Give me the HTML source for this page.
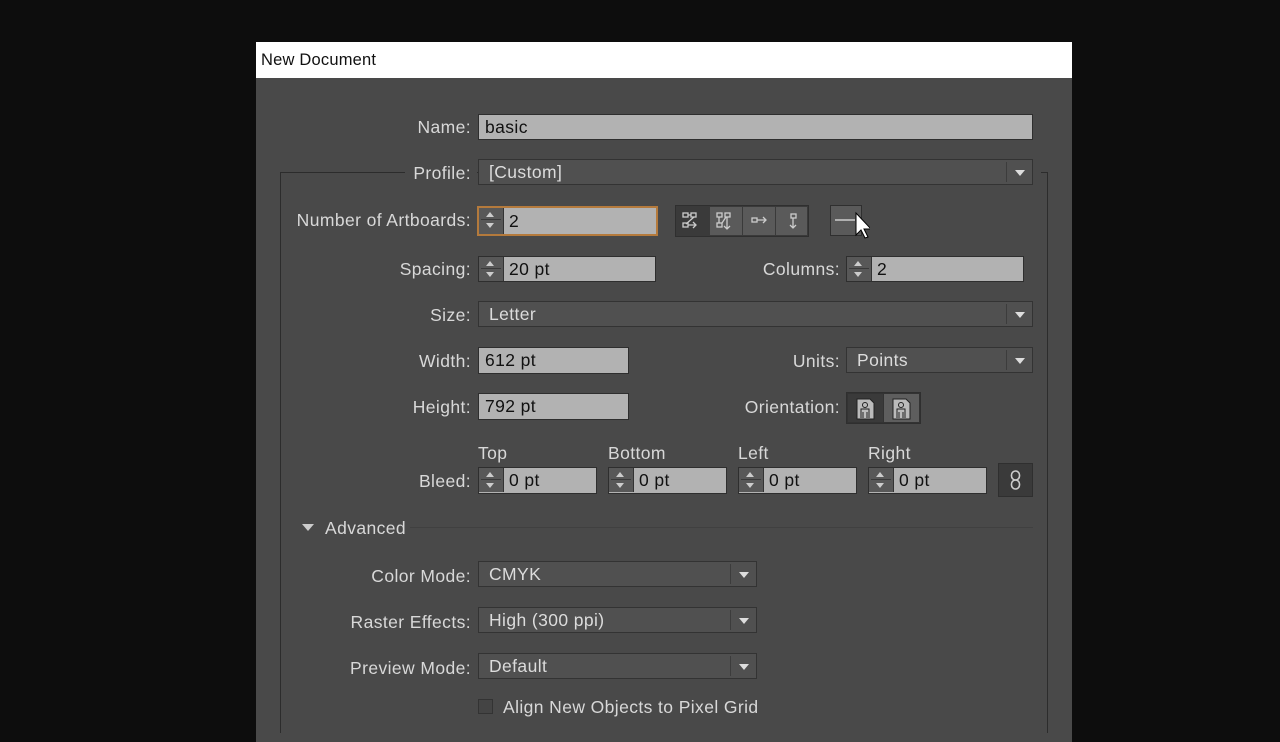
<!DOCTYPE html>
<html><head><style>
body{margin:0;width:1280px;height:720px;background:#0d0d0d;overflow:hidden;font-family:"Liberation Sans",sans-serif;font-size:17.5px;letter-spacing:0.4px;}
.dlg{position:absolute;left:256px;top:42px;width:816px;height:700px;background:#494949;}
.title{position:absolute;left:256px;top:42px;width:816px;height:36px;background:#fff;color:#111;font-size:16.5px;line-height:36px;letter-spacing:0.2px}
.title span{margin-left:5px}
.a{position:absolute;}
.lbl{position:absolute;color:#d8d8d8;text-align:right;white-space:nowrap;}
.inp{position:absolute;background:#b2b2b2;border:1px solid #2e2e2e;color:#111;height:24px;line-height:24px;box-sizing:border-box;padding-left:6px;}
.spin{position:absolute;background:#b2b2b2;border:1px solid #2e2e2e;height:26px;box-sizing:border-box;color:#111;line-height:24px;}
.spin .ar{position:absolute;left:0;top:0;width:24px;height:24px;background:#585858;border-right:1px solid #333;}
.spin .ar:before{content:"";position:absolute;left:7px;top:4px;border:4px solid transparent;border-bottom:5px solid #ccc;border-top:0}
.spin .ar:after{content:"";position:absolute;left:7px;top:15px;border:4px solid transparent;border-top:5px solid #ccc;border-bottom:0}
.spin .ar i{position:absolute;left:2px;right:2px;top:11px;border-top:1px solid #3a3a3a}
.spin .t{position:absolute;left:30px;}
.dd{position:absolute;background:#505050;border:1px solid #333;height:26px;box-sizing:border-box;color:#dcdcdc;line-height:24px;padding-left:10px;}
.dd:after{content:"";position:absolute;right:7px;top:10px;border:5px solid transparent;border-top:6px solid #ddd;border-bottom:0}
.dd .sep{position:absolute;right:25px;top:2px;bottom:2px;border-left:1px solid #3c3c3c}
.btn{position:absolute;background:#5a5a5a;border:1px solid #2f2f2f;box-sizing:border-box;}
</style></head><body>
<div class="dlg"></div>
<div class="title"><span>New Document</span></div>
<div class="a" style="left:280px;top:172px;width:766px;height:560px;border:1px solid #2c2c2c;border-bottom:none"></div>

<div class="lbl" style="right:809px;top:117px">Name:</div>
<div class="inp" style="left:478px;top:114px;width:555px;height:26px">basic</div>

<div class="a" style="left:405px;top:160px;width:72px;height:26px;background:#494949"></div>
<div class="a" style="left:1033px;top:160px;width:8px;height:26px;background:#494949"></div>
<div class="lbl" style="right:809px;top:163px">Profile:</div>
<div class="dd" style="left:478px;top:159px;width:555px">[Custom]<span class="sep"></span></div>

<div class="lbl" style="right:809px;top:210px">Number of Artboards:</div>
<div class="spin" style="left:477px;top:206px;width:181px;height:30px;border:2px solid #b47a3c"><div class="ar" style="height:26px"><i></i></div><span class="t" style="line-height:26px">2</span></div>
<div class="btn" style="left:675px;top:205px;width:134px;height:32px;background:#3a3a3a"></div>
<div class="btn" style="left:677px;top:207px;width:32px;height:28px;background:#3a3a3a;border:none"></div>
<div class="btn" style="left:710px;top:207px;width:32px;height:28px;border:none"></div>
<div class="btn" style="left:743px;top:207px;width:32px;height:28px;border:none"></div>
<div class="btn" style="left:776px;top:207px;width:31px;height:28px;border:none"></div>
<svg class="a" style="left:675px;top:205px" width="134" height="32" fill="none" stroke="#ccc" stroke-width="1.3">
<rect x="8" y="8" width="5" height="4"/><rect x="16" y="8" width="5" height="4"/><path d="M13 10h3M19 12l-8 7"/><rect x="8" y="18" width="5" height="4"/><path d="M13 20h8m-3-3l3 3-3 3"/>
<rect x="42" y="8" width="5" height="4"/><rect x="50" y="8" width="5" height="4"/><rect x="42" y="18" width="5" height="4"/><path d="M44 12v6M52 12v12m-3-3l3 3 3-3M47 18l4-6"/>
<rect x="77" y="13" width="5" height="4"/><path d="M82 15h9m-3-3l3 3-3 3"/>
<rect x="116" y="9" width="5" height="4"/><path d="M118 13v10m-3-3l3 3 3-3"/>
</svg>
<div class="btn" style="left:830px;top:205px;width:32px;height:31px"></div>
<svg class="a" style="left:830px;top:205px" width="40" height="40"><path d="M5 15h20" stroke="#ccc" stroke-width="1.5"/><path d="M26 8v22l5-5 4 8 3-1-4-8h7z" fill="#fff" stroke="#000"/></svg>

<div class="lbl" style="right:809px;top:259px">Spacing:</div>
<div class="spin" style="left:478px;top:256px;width:178px"><div class="ar"><i></i></div><span class="t">20 pt</span></div>
<div class="lbl" style="right:440px;top:259px">Columns:</div>
<div class="spin" style="left:846px;top:256px;width:178px"><div class="ar"><i></i></div><span class="t">2</span></div>

<div class="lbl" style="right:809px;top:305px">Size:</div>
<div class="dd" style="left:478px;top:301px;width:555px">Letter<span class="sep"></span></div>

<div class="lbl" style="right:809px;top:351px">Width:</div>
<div class="inp" style="left:478px;top:347px;width:151px;height:27px">612 pt</div>
<div class="lbl" style="right:440px;top:351px">Units:</div>
<div class="dd" style="left:846px;top:347px;width:187px">Points<span class="sep"></span></div>

<div class="lbl" style="right:809px;top:397px">Height:</div>
<div class="inp" style="left:478px;top:393px;width:151px;height:27px">792 pt</div>
<div class="lbl" style="right:440px;top:397px">Orientation:</div>
<div class="btn" style="left:846px;top:392px;width:75px;height:32px;background:#333"></div>
<div class="btn" style="left:848px;top:394px;width:35px;height:28px;background:#3a3a3a;border:none"></div>
<div class="btn" style="left:884px;top:394px;width:35px;height:28px;background:#5e5e5e;border:none"></div>
<svg class="a" style="left:848px;top:394px" width="72" height="28" fill="#bbb" stroke="#222" stroke-width="1">
<path d="M9 5h13l4 4v16H9z"/><circle cx="17" cy="11" r="2.5"/><path d="M13 24v-9h8v9M15 24v-6M19 24v-6"/>
<path d="M45 5h13l4 4v16H45z"/><circle cx="53" cy="11" r="2.5"/><path d="M49 24v-9h8v9M51 24v-6M55 24v-6"/>
</svg>

<div class="lbl" style="left:478px;top:443px">Top</div>
<div class="lbl" style="left:608px;top:443px">Bottom</div>
<div class="lbl" style="left:738px;top:443px">Left</div>
<div class="lbl" style="left:868px;top:443px">Right</div>
<div class="lbl" style="right:809px;top:471px">Bleed:</div>
<div class="spin" style="left:478px;top:467px;width:119px;height:27px"><div class="ar"><i></i></div><span class="t">0 pt</span></div>
<div class="spin" style="left:608px;top:467px;width:119px;height:27px"><div class="ar"><i></i></div><span class="t">0 pt</span></div>
<div class="spin" style="left:738px;top:467px;width:119px;height:27px"><div class="ar"><i></i></div><span class="t">0 pt</span></div>
<div class="spin" style="left:868px;top:467px;width:119px;height:27px"><div class="ar"><i></i></div><span class="t">0 pt</span></div>
<div class="btn" style="left:998px;top:463px;width:35px;height:34px;background:#3a3a3a"></div>
<svg class="a" style="left:998px;top:463px" width="35" height="34" fill="none" stroke="#ccc" stroke-width="1.6"><rect x="13.5" y="8" width="8" height="9" rx="4"/><rect x="13.5" y="17" width="8" height="9" rx="4"/></svg>

<div class="a" style="left:410px;top:527px;width:623px;border-top:1px solid #404040"></div>
<div class="a" style="left:302px;top:524px;border:6px solid transparent;border-top:7px solid #ccc;border-bottom:0"></div>
<div class="lbl" style="left:325px;top:518px">Advanced</div>

<div class="lbl" style="right:809px;top:566px">Color Mode:</div>
<div class="dd" style="left:478px;top:561px;width:279px">CMYK<span class="sep"></span></div>
<div class="lbl" style="right:809px;top:612px">Raster Effects:</div>
<div class="dd" style="left:478px;top:607px;width:279px">High (300 ppi)<span class="sep"></span></div>
<div class="lbl" style="right:809px;top:658px">Preview Mode:</div>
<div class="dd" style="left:478px;top:653px;width:279px">Default<span class="sep"></span></div>
<div class="a" style="left:478px;top:699px;width:15px;height:15px;border:1px solid #333;background:#444;box-sizing:border-box"></div>
<div class="lbl" style="left:503px;top:697px">Align New Objects to Pixel Grid</div>
</body></html>
